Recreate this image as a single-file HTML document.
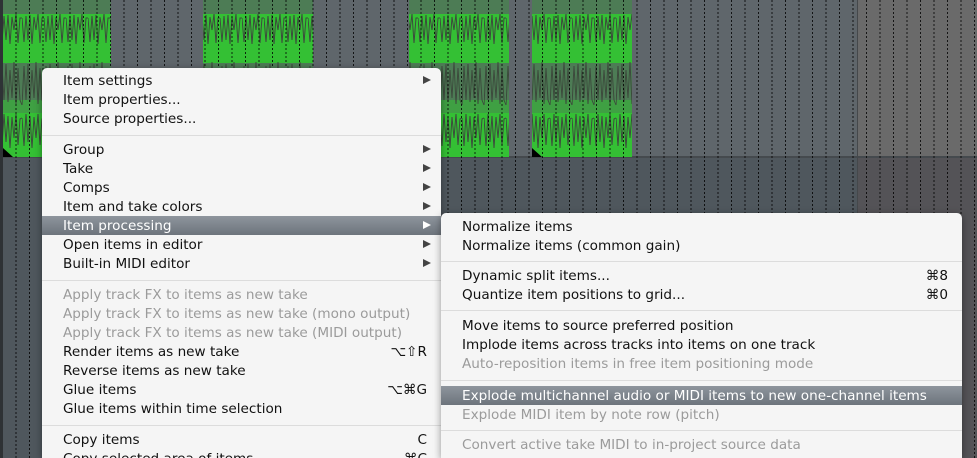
<!DOCTYPE html>
<html><head><meta charset="utf-8"><style>
*{margin:0;padding:0;box-sizing:border-box}
html,body{width:977px;height:458px;overflow:hidden}
body{position:relative;background:#4f575d;font-family:"DejaVu Sans","Liberation Sans",sans-serif;font-size:13.6px}
.abs{position:absolute}
.dots{background-image:repeating-linear-gradient(90deg,transparent 0 12.5px,rgba(0,0,0,.8) 12.5px 13.5px);}
.dotsmask{-webkit-mask:repeating-linear-gradient(180deg,#000 0 2px,transparent 2px 4px);mask:repeating-linear-gradient(180deg,#000 0 2px,transparent 2px 4px)}
.item{position:absolute;top:0;height:157px;background:linear-gradient(180deg,#4d7c55 0 14px,#34c034 14px 63px,#4d7c55 63px 100px,#3fa043 100px 113px,#34c034 113px 157px);overflow:hidden}
.menu{position:absolute;background:#f5f5f5;border-radius:5px 5px 0 0;box-shadow:0 2px 8px rgba(0,0,0,.4);overflow:hidden}
.r{position:absolute;left:0;right:0;height:19px;line-height:19px;padding-top:1px;padding-left:21px;color:#111;white-space:nowrap}
.r.d{color:#9b9b9b}
.r.h{background:linear-gradient(180deg,#8e959d,#6d747c);color:#fff}
.r .k{position:absolute;right:14px;top:1px}
.r .a{position:absolute;right:10px;top:5px;width:0;height:0;border-left:8px solid #444;border-top:4.5px solid transparent;border-bottom:4.5px solid transparent}
.r.h .a{border-left-color:#fff}
.sep{position:absolute;left:0;right:0;height:1px;background:#dcdcdc}
</style></head><body>
<div class="abs" style="left:0;top:0;width:858px;height:157px;background:#5f666b"></div>
<div class="abs" style="left:858px;top:0;width:119px;height:157px;background:#6a6a6a"></div>
<div class="abs" style="left:0;top:157px;width:858px;height:301px;background:#4f575d"></div>
<div class="abs" style="left:858px;top:157px;width:119px;height:301px;background:#545357"></div>
<div class="abs" style="left:0;top:156px;width:977px;height:2px;background:#454a4e"></div>
<div class="abs" style="left:857px;top:0;width:1px;height:458px;background:#45484b"></div>
<div class="abs" style="left:0;top:0;width:3px;height:458px;background:#2e3235"></div>

<div class="item" style="left:3px;width:108px"></div>
<div class="item" style="left:203px;width:110px"></div>
<div class="item" style="left:409px;width:100px"></div>
<div class="item" style="left:532px;width:100px"></div>
<svg class="abs" style="left:0;top:0" width="977" height="157">
<defs><pattern id="w" width="22" height="157" patternUnits="userSpaceOnUse">
<path d="M0 18 L2 42 L4 16 L6 40 L8 15 L10 44 L12 17 L14 30 L16 14 L18 43 L20 18 L22 18 M0 105 L2 66 L4 100 L6 64 L8 102 L10 70 L12 98 L14 62 L16 104 L18 68 L20 100 L22 105 M0 118 L2 146 L4 114 L6 142 L8 116 L10 148 L12 117 L14 138 L16 114 L18 145 L20 119 L22 118" fill="none" stroke="#3c4a3c" stroke-width="1"/>
</pattern></defs>
<rect x="3" width="108" height="157" fill="url(#w)"/>
<rect x="203" width="110" height="157" fill="url(#w)"/>
<rect x="409" width="100" height="157" fill="url(#w)"/>
<rect x="532" width="100" height="157" fill="url(#w)"/>
<path d="M3 148 L3 157 L13 157Z M532 148 L532 157 L542 157Z M203 148 L203 157 L213 157Z M409 148 L409 157 L419 157Z" fill="#000"/>
</svg>
<div class="abs dots dotsmask" style="left:3px;top:0;width:974px;height:458px"></div>

<div class="menu" style="left:42px;top:68px;width:399px;height:390px">
<div class="r" style="top:3px">Item settings<span class="a"></span></div>
<div class="r" style="top:22px">Item properties...</div>
<div class="r" style="top:41px">Source properties...</div>
<div class="sep" style="top:67px"></div>
<div class="r" style="top:72px">Group<span class="a"></span></div>
<div class="r" style="top:91px">Take<span class="a"></span></div>
<div class="r" style="top:110px">Comps<span class="a"></span></div>
<div class="r" style="top:129px">Item and take colors<span class="a"></span></div>
<div class="r h" style="top:148px">Item processing<span class="a"></span></div>
<div class="r" style="top:167px">Open items in editor<span class="a"></span></div>
<div class="r" style="top:186px">Built-in MIDI editor<span class="a"></span></div>
<div class="sep" style="top:212px"></div>
<div class="r d" style="top:217px">Apply track FX to items as new take</div>
<div class="r d" style="top:236px">Apply track FX to items as new take (mono output)</div>
<div class="r d" style="top:255px">Apply track FX to items as new take (MIDI output)</div>
<div class="r" style="top:274px">Render items as new take<span class="k">⌥⇧R</span></div>
<div class="r" style="top:293px">Reverse items as new take</div>
<div class="r" style="top:312px">Glue items<span class="k">⌥⌘G</span></div>
<div class="r" style="top:331px">Glue items within time selection</div>
<div class="sep" style="top:357px"></div>
<div class="r" style="top:362px">Copy items<span class="k">C</span></div>
<div class="r" style="top:381px">Copy selected area of items<span class="k">⌘C</span></div>
</div>

<div class="menu" style="left:441px;top:213px;width:521px;height:245px">
<div class="r" style="top:4px">Normalize items</div>
<div class="r" style="top:23px">Normalize items (common gain)</div>
<div class="sep" style="top:48px"></div>
<div class="r" style="top:53px">Dynamic split items...<span class="k">⌘8</span></div>
<div class="r" style="top:72px">Quantize item positions to grid...<span class="k">⌘0</span></div>
<div class="sep" style="top:97px"></div>
<div class="r" style="top:103px">Move items to source preferred position</div>
<div class="r" style="top:122px">Implode items across tracks into items on one track</div>
<div class="r d" style="top:141px">Auto-reposition items in free item positioning mode</div>
<div class="sep" style="top:167px"></div>
<div class="r h" style="top:173px">Explode multichannel audio or MIDI items to new one-channel items</div>
<div class="r d" style="top:192px">Explode MIDI item by note row (pitch)</div>
<div class="sep" style="top:217px"></div>
<div class="r d" style="top:222px">Convert active take MIDI to in-project source data</div>
<div class="r d" style="top:241px">Convert active take MIDI to file</div>
</div>
</body></html>
